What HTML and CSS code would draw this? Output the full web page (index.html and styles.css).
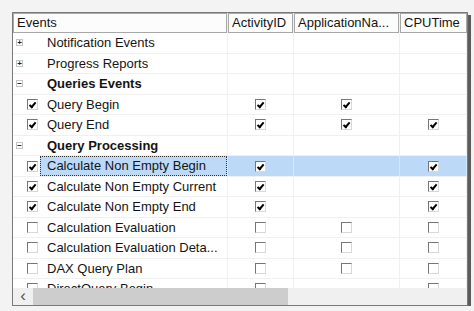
FILE: index.html
```html
<!doctype html>
<html lang="en">
  <head>
    <meta charset="UTF-8" />
    <title>Events</title>
    <link rel="stylesheet" href="styles.css">
  </head>
  <body>
    <div class="frame">
      <div class="head">
        <div class="hcell">Events</div>
        <div class="hcell">ActivityID</div>
        <div class="hcell">ApplicationNa...</div>
        <div class="hcell">CPUTime</div>
      </div>

      <div class="grid-body">
        <div class="row">
          <div class="cell ev"><span class="exp">+</span><span></span><span class="name">Notification Events</span></div>
          <div class="cell"></div><div class="cell"></div><div class="cell"></div>
        </div>
        <div class="row">
          <div class="cell ev"><span class="exp">+</span><span></span><span class="name">Progress Reports</span></div>
          <div class="cell"></div><div class="cell"></div><div class="cell"></div>
        </div>
        <div class="row">
          <div class="cell ev"><span class="exp">&minus;</span><span></span><span class="name bold">Queries Events</span></div>
          <div class="cell"></div><div class="cell"></div><div class="cell"></div>
        </div>
        <div class="row">
          <div class="cell ev"><span></span><span class="cb on"></span><span class="name">Query Begin</span></div>
          <div class="cell"><span class="cb on"></span></div>
          <div class="cell"><span class="cb on"></span></div>
          <div class="cell"></div>
        </div>
        <div class="row">
          <div class="cell ev"><span></span><span class="cb on"></span><span class="name">Query End</span></div>
          <div class="cell"><span class="cb on"></span></div>
          <div class="cell"><span class="cb on"></span></div>
          <div class="cell"><span class="cb on"></span></div>
        </div>
        <div class="row">
          <div class="cell ev"><span class="exp">&minus;</span><span></span><span class="name bold">Query Processing</span></div>
          <div class="cell"></div><div class="cell"></div><div class="cell"></div>
        </div>
        <div class="row selected">
          <div class="cell ev"><span></span><span class="cb on"></span><span class="name focus">Calculate Non Empty Begin</span></div>
          <div class="cell"><span class="cb on"></span></div>
          <div class="cell"></div>
          <div class="cell"><span class="cb on"></span></div>
        </div>
        <div class="row">
          <div class="cell ev"><span></span><span class="cb on"></span><span class="name">Calculate Non Empty Current</span></div>
          <div class="cell"><span class="cb on"></span></div>
          <div class="cell"></div>
          <div class="cell"><span class="cb on"></span></div>
        </div>
        <div class="row">
          <div class="cell ev"><span></span><span class="cb on"></span><span class="name">Calculate Non Empty End</span></div>
          <div class="cell"><span class="cb on"></span></div>
          <div class="cell"></div>
          <div class="cell"><span class="cb on"></span></div>
        </div>
        <div class="row">
          <div class="cell ev"><span></span><span class="cb"></span><span class="name">Calculation Evaluation</span></div>
          <div class="cell"><span class="cb"></span></div>
          <div class="cell"><span class="cb"></span></div>
          <div class="cell"><span class="cb"></span></div>
        </div>
        <div class="row">
          <div class="cell ev"><span></span><span class="cb"></span><span class="name">Calculation Evaluation Deta...</span></div>
          <div class="cell"><span class="cb"></span></div>
          <div class="cell"><span class="cb"></span></div>
          <div class="cell"><span class="cb"></span></div>
        </div>
        <div class="row">
          <div class="cell ev"><span></span><span class="cb"></span><span class="name">DAX Query Plan</span></div>
          <div class="cell"><span class="cb"></span></div>
          <div class="cell"><span class="cb"></span></div>
          <div class="cell"><span class="cb"></span></div>
        </div>
        <div class="row">
          <div class="cell ev"><span></span><span class="cb"></span><span class="name">DirectQuery Begin</span></div>
          <div class="cell"><span class="cb"></span></div>
          <div class="cell"></div>
          <div class="cell"><span class="cb"></span></div>
        </div>
      </div>

      <div class="hscroll">
        <div class="arrow">&lsaquo;</div>
        <div class="thumb"></div>
      </div>
    </div>
  </body>
</html>
```

FILE: styles.css
```css
body {
  margin: 0;
  background-color: #f3f3f3;
  font-family: 'Liberation Sans', Arial, sans-serif;
  font-size: 13px;
  color: #141414;
}

.frame {
  margin: 12px 0 0 12px;
  width: 456px;
  height: 294px;
  box-sizing: border-box;
  border: 1px solid #7a7a7a;
  background-color: #fff;
  box-shadow: 3px 3px 0 #5c5c5c;
  display: flex;
  flex-direction: column;
}

.head,
.row {
  display: grid;
  grid-template-columns: 215px 66px 106px 67px;
}

.head {
  height: 20px;
  background-color: #f0f0f0;
}

.hcell {
  border: 1px solid #a8a8a8;
  margin-right: 1px;
  background-color: #fcfcfc;
  padding-left: 3px;
  line-height: 18px;
  white-space: nowrap;
  overflow: hidden;
}

.hcell:last-child {
  margin-right: 0;
}

.grid-body {
  flex: 1;
  overflow: hidden;
}

.row {
  height: 20.5px;
  box-sizing: border-box;
  border-bottom: 1px solid #f0f0f0;
}

.cell {
  border-right: 1px solid #f0f0f0;
  display: flex;
  align-items: center;
  justify-content: center;
}

.cell.ev {
  display: grid;
  grid-template-columns: 14px 13px 1fr;
  align-items: center;
  justify-content: stretch;
}

.name {
  padding-left: 7px;
  white-space: nowrap;
  overflow: hidden;
  line-height: 19px;
}

.bold {
  font-weight: bold;
}

.exp {
  width: 7px;
  height: 7px;
  margin-left: 3px;
  box-sizing: border-box;
  border: 1px solid #c4c4c4;
  font-size: 8px;
  font-weight: bold;
  line-height: 5px;
  text-align: center;
  color: #222;
}

.cb {
  width: 11px;
  height: 11px;
  box-sizing: border-box;
  border: 1px solid #d8d8d8;
  border-top-color: #767676;
  border-left-color: #767676;
  background-color: #fff;
  position: relative;
}

.cb.on::after {
  content: '';
  position: absolute;
  left: 1px;
  top: 1px;
  width: 5px;
  height: 2px;
  border-left: 2px solid #000;
  border-bottom: 2px solid #000;
  transform: rotate(-50deg) translate(-1px, 1px);
}

.selected .cell {
  background-color: #bcdaf8;
  border-right-color: #d4e7fb;
}

.selected .cell.ev {
  background-color: transparent;
}

.focus {
  background-color: #bcdaf8;
  outline: 1px dotted #333;
  outline-offset: -1px;
  align-self: stretch;
  line-height: 20px;
}

.hscroll {
  height: 17px;
  background-color: #f0f0f0;
  display: flex;
  align-items: stretch;
}

.arrow {
  width: 20px;
  text-align: center;
  font-size: 17px;
  line-height: 15px;
  color: #555;
}

.thumb {
  width: 255px;
  background-color: #cdcdcd;
}
```
